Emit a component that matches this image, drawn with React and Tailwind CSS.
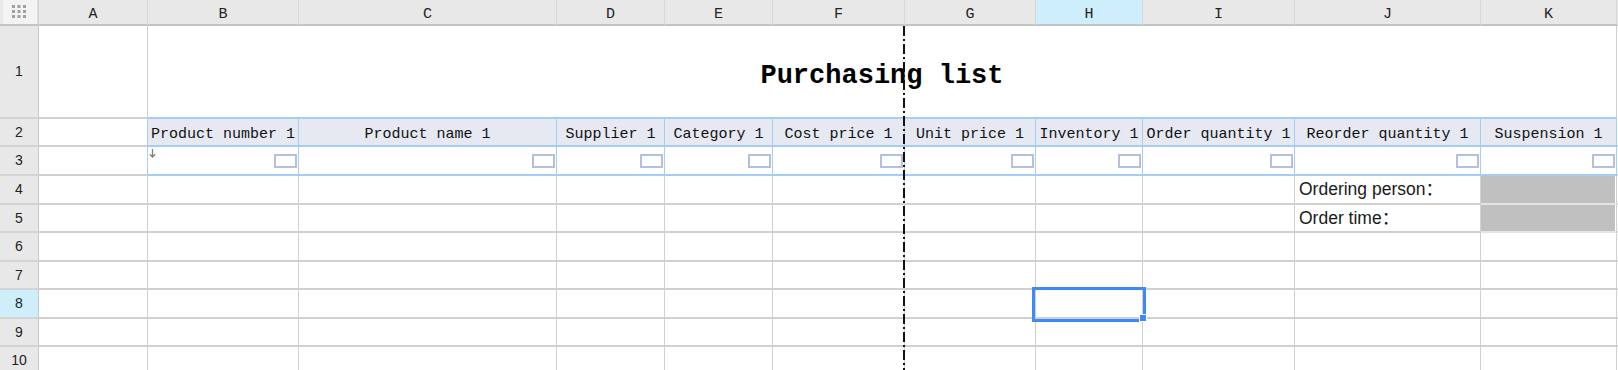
const letters = ['A', 'B', 'C', 'D', 'E', 'F', 'G', 'H', 'I', 'J', 'K'];

const fields = [
  'Product number 1',
  'Product name 1',
  'Supplier 1',
  'Category 1',
  'Cost price 1',
  'Unit price 1',
  'Inventory 1',
  'Order quantity 1',
  'Reorder quantity 1',
  'Suspension 1',
];

const rows = [2, 3, 4, 5, 6, 7, 8, 9, 10];

function CornerDots() {
  return (
    <div className="flex h-full w-full items-stretch pl-[3px]">
      <div className="flex flex-1 items-center justify-center border-r border-[#dcdcdc] bg-[#f3f3f3]">
        <svg width="16" height="14" viewBox="0 0 16 14">
          {[0, 1, 2].map(r =>
            [0, 1, 2].map(c => (
              <rect key={`${r}${c}`} x={c * 5.5} y={r * 5} width="3" height="3" fill="#a0a0a0" />
            ))
          )}
        </svg>
      </div>
    </div>
  );
}

function InputBox() {
  return <div className="h-[14px] w-[23px] border-2 border-[#b3c1dc] bg-white" />;
}

function Cell({ r, c }) {
  const col = letters[c];
  const inBlock = c >= 1 && (r === 2 || r === 3);

  if (col === 'A') {
    return (
      <div
        className={`border-b-2 border-b-[#d0d0d0] border-r ${
          r === 2 || r === 3 ? 'border-r-[#a6cdf4]' : 'border-r-[#d0d0d0]'
        }`}
      />
    );
  }

  if (inBlock && r === 2) {
    return (
      <div className="flex items-center justify-center overflow-hidden whitespace-nowrap border-b-2 border-r border-[#a6cdf4] bg-[#e6e9f1] pt-[6px] font-['Liberation_Mono',monospace] text-[15px] text-[#111]">
        {fields[c - 1]}
      </div>
    );
  }

  if (inBlock && r === 3) {
    return (
      <div className="relative flex items-center justify-end border-b-2 border-r border-[#a6cdf4] pr-px">
        {col === 'B' && (
          <svg className="absolute left-[1px] top-[2px]" width="7" height="9" viewBox="0 0 7 9">
            <path d="M3.5 0 V8 M0.8 5.2 L3.5 8 L6.2 5.2" stroke="#808080" strokeWidth="1.3" fill="none" />
          </svg>
        )}
        <InputBox />
      </div>
    );
  }

  if (col === 'J' && (r === 4 || r === 5)) {
    return (
      <div className="flex items-center whitespace-nowrap border-b-2 border-r border-[#d0d0d0] pl-[4px] font-['Liberation_Sans','Noto_Sans_CJK_SC',sans-serif] text-[17.5px] text-[#1a1a1a]">
        {r === 4 ? 'Ordering person：' : 'Order time：'}
      </div>
    );
  }

  if (col === 'K' && (r === 4 || r === 5)) {
    return (
      <div className="flex border-b-2 border-r border-b-[#e4e4e4] border-r-[#d0d0d0]">
        <div className="mr-[1px] flex-1 bg-[#c0c0c0]" />
      </div>
    );
  }

  if (col === 'H' && r === 8) {
    return (
      <div className="relative border-b-2 border-r border-[#d0d0d0]">
        <div className="absolute -left-[4px] -top-[3px] h-[35px] w-[114px] border-[3px] border-[#3d8af7]" />
        <div className="absolute -bottom-[5px] -right-[5px] h-[8px] w-[8px] border border-white bg-[#3d8af7]" />
      </div>
    );
  }

  return <div className="border-b-2 border-r border-[#d0d0d0]" />;
}

export default function App() {
  return (
    <div className="relative h-[370px] w-[1618px] overflow-hidden bg-white">
      <div className="grid grid-cols-[39px_109px_151px_258px_108px_108px_132px_131px_107px_152px_186px_136px_1fr] grid-rows-[26px_93px_28px_29px_29px_28px_29px_28px_29px_28px_28px]">
        {/* column letters */}
        <div className="border-b-2 border-r border-b-[#c4c4c4] border-r-[#d0d0d0] bg-[#e8e8e8]">
          <CornerDots />
        </div>
        {letters.map(l => (
          <div
            key={l}
            className={`flex items-center justify-center border-b-2 border-r border-b-[#c4c4c4] border-r-[#d8d8d8] pt-[7px] font-['Liberation_Mono',monospace] text-[15px] text-[#222] ${
              l === 'H' ? 'bg-[#cdeefa]' : 'bg-[#e8e8e8]'
            }`}
          >
            {l}
          </div>
        ))}
        <div className="border-b-2 border-b-[#c4c4c4] bg-[#e8e8e8]" />

        {/* row 1 - title */}
        <div className="flex items-center justify-center border-b-2 border-r border-b-[#d4d4d4] border-r-[#c8c8c8] bg-[#e8e8e8] font-['Liberation_Sans',sans-serif] text-[14px] text-[#222]">
          1
        </div>
        <div className="border-b-2 border-r border-b-[#d0d0d0] border-r-[#d0d0d0]" />
        <div className="col-span-10 flex items-center justify-center border-b-2 border-r border-b-[#a6cdf4] border-r-[#d0d0d0] pt-[9px] font-['Liberation_Mono',monospace] text-[27px] font-bold text-black">
          Purchasing list
        </div>
        <div />

        {/* rows 2 - 10 */}
        {rows.map(r => (
          <div key={r} className="contents">
            <div
              className={`flex items-center justify-center border-b-2 border-r border-b-[#d4d4d4] border-r-[#c8c8c8] font-['Liberation_Sans',sans-serif] text-[14px] text-[#222] ${
                r === 8 ? 'bg-[#cdeefa]' : 'bg-[#e8e8e8]'
              }`}
            >
              {r}
            </div>
            {letters.map((l, c) => (
              <Cell key={l} r={r} c={c} />
            ))}
            <div className="border-b-2 border-[#d0d0d0]" />
          </div>
        ))}
      </div>

      {/* page break marker */}
      <svg className="pointer-events-none absolute left-[903px] top-[26px]" width="2" height="344">
        <line x1="1" y1="0" x2="1" y2="344" stroke="#111" strokeWidth="2" strokeDasharray="10 3 2 3" />
      </svg>
    </div>
  );
}
